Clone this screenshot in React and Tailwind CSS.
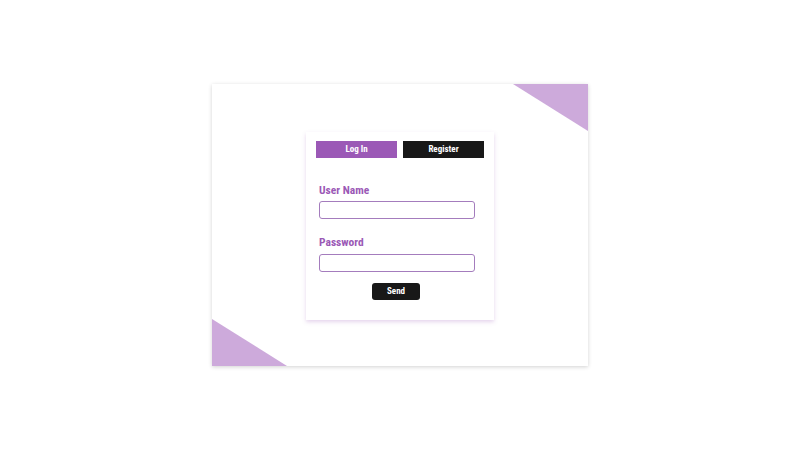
export default function App() {
  const font = { fontFamily: "'Roboto Condensed', 'Liberation Sans Narrow', Roboto, sans-serif" };
  return (
    <div className="w-[800px] h-[450px] bg-white flex items-center justify-center" style={font}>
      <div className="relative w-[376px] h-[282px] bg-white shadow-[0_1px_4px_rgba(0,0,0,0.18)] flex items-center justify-center overflow-hidden">
        <svg className="absolute right-0 top-0" width="75" height="47" viewBox="0 0 75 47">
          <polygon points="0,0 75,0 75,47" fill="#cdaadb" />
        </svg>
        <svg className="absolute left-0 bottom-0" width="75" height="47" viewBox="0 0 75 47">
          <polygon points="0,0 0,47 75,47" fill="#cdaadb" />
        </svg>
        <div className="relative w-[188px] h-[188px] mt-[2px] bg-white shadow-[0_2px_4px_rgba(155,89,182,0.25)] flex flex-col px-[10px] pt-[9px]">
          <div className="flex gap-[6px]">
            <div className="w-[81px] h-[17px] bg-[#9b59b6] text-white text-[9px] font-bold flex items-center justify-center">Log In</div>
            <div className="w-[81px] h-[17px] bg-[#181818] text-white text-[9px] font-bold flex items-center justify-center">Register</div>
          </div>
          <div className="px-[3px] flex flex-col">
            <div className="mt-[25px] text-[11.5px] leading-[14px] font-bold text-[#9b59b6]">User Name</div>
            <div className="mt-[4px] w-[156px] h-[18px] rounded-[3px] border-[1.5px] border-[#a47cbd]"></div>
            <div className="mt-[16px] text-[11.5px] leading-[14px] font-bold text-[#9b59b6]">Password</div>
            <div className="mt-[5px] w-[156px] h-[18px] rounded-[3px] border-[1.5px] border-[#a47cbd]"></div>
          </div>
          <div className="mt-[11px] flex justify-center pr-[8px]">
            <div className="w-[48px] h-[17px] rounded-[3px] bg-[#181818] text-white text-[9px] font-bold flex items-center justify-center">Send</div>
          </div>
        </div>
      </div>
    </div>
  );
}
